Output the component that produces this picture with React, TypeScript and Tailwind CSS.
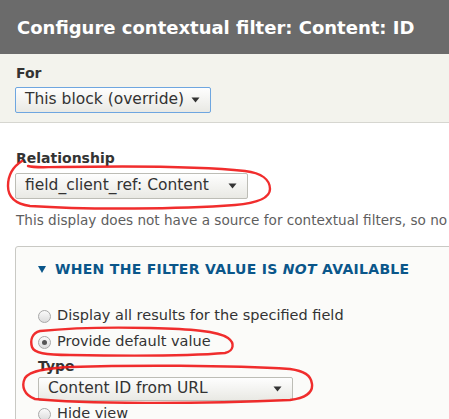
import React from 'react';

function Caret() {
  return (
    <svg aria-hidden="true" className="h-[6px] w-[9px]" viewBox="0 0 9 6">
      <path d="M0.5 0.5h8L4.5 5.5z" fill="#333" />
    </svg>
  );
}

function Select({ label, width, height, focused }: { label: string; width: string; height: string; focused?: boolean }) {
  return (
    <div
      className={`flex items-center justify-between rounded-[2px] border bg-gradient-to-b from-[#fefefe] to-[#e9e9e4] pl-[9px] pr-[10px] text-[15.5px] leading-none text-[#333] ${width} ${height} ${
        focused ? 'border-[#6ea6e0]' : 'border-[#bdbdb6]'
      }`}
    >
      <span>{label}</span>
      <Caret />
    </div>
  );
}

function Radio({ label, checked }: { label: string; checked?: boolean }) {
  return (
    <div className="flex h-[20px] items-center gap-[6px] text-[14.5px] text-[#333]">
      <span className="flex h-[13px] w-[13px] items-center justify-center rounded-full border border-[#a8a8a8] bg-gradient-to-b from-[#fafafa] to-[#dcdcdc]">
        {checked && <span className="h-[5px] w-[5px] rounded-full bg-[#555]" />}
      </span>
      <span>{label}</span>
    </div>
  );
}

export default function App() {
  return (
    <div className="relative h-[419px] w-[449px] overflow-hidden bg-white font-['DejaVu_Sans',sans-serif]">
      <div className="flex h-[54px] items-center bg-[#6b6b6b] pl-[17px] text-[18px] font-bold text-white">
        Configure contextual filter: Content: ID
      </div>
      <div className="border-b border-[#d6d6d0] bg-[#f3f3ed] px-[15px] pb-[9px] pt-[9px]">
        <div className="mb-[4px] pl-[1px] text-[14px] font-bold leading-[20px] text-[#333]">For</div>
        <Select label="This block (override)" width="w-[196px]" height="h-[26px]" focused />
      </div>
      <div className="px-[15px] pt-[25px]">
        <div className="mb-[5px] pl-[1px] text-[14px] font-bold leading-[20px] text-[#333]">Relationship</div>
        <Select label="field_client_ref: Content" width="w-[233px]" height="h-[26px]" />
        <div className="mt-[11px] whitespace-nowrap pl-[1px] text-[13.6px] leading-[20px] text-[#5e5e5e]">
          This display does not have a source for contextual filters, so no
        </div>
        <div className="mt-[16px] w-[460px] rounded-[3px] border border-[#c9c9c4] bg-[#fbfbf9] pl-[22px] pt-[12px]">
          <div className="flex h-[20px] items-center gap-[9px] text-[14px] font-bold tracking-[0.3px] text-[#0a568a]">
            <svg aria-hidden="true" className="h-[7px] w-[8px]" viewBox="0 0 8 7">
              <path d="M0 0h8L4 7z" fill="#0a568a" />
            </svg>
            <span>
              WHEN THE FILTER VALUE IS <em>NOT</em> AVAILABLE
            </span>
          </div>
          <div className="mt-[27px] flex flex-col gap-[6px]">
            <Radio label="Display all results for the specified field" />
            <Radio label="Provide default value" checked />
          </div>
          <div className="pt-[4px]">
            <div className="mb-[1px] text-[14px] font-bold leading-[20px] text-[#333]">Type</div>
            <Select label="Content ID from URL" width="w-[255px]" height="h-[24px]" />
            <div className="mt-[3px]">
              <Radio label="Hide view" />
            </div>
          </div>
        </div>
      </div>
      <svg aria-hidden="true" className="pointer-events-none absolute inset-0" width="449" height="419" viewBox="0 0 449 419" fill="none">
        <g stroke="#f01c1c" strokeWidth="2.4" strokeLinecap="round" strokeLinejoin="round" opacity="0.92">
          <path d="M22 161C14 166 8 174 8 186C8 198 16 204 30 206C90 210 180 209 235 205C258 203 270 198 270 189C270 180 262 173 245 171C200 166 120 166 60 167C45 167 34 168 28 166" />
          <path d="M40 331C32 333 30 340 32 347C34 353 45 355 70 355C130 356 190 356 225 353C234 351 235 343 228 338C218 331 190 329 150 328C110 327 70 328 40 331" />
          <path d="M70 367C50 368 30 370 25 378C21 386 24 395 35 399C80 404 200 404 290 400C306 398 313 392 312 384C311 375 304 371 290 369C230 365 130 365 70 367" />
        </g>
      </svg>
    </div>
  );
}
